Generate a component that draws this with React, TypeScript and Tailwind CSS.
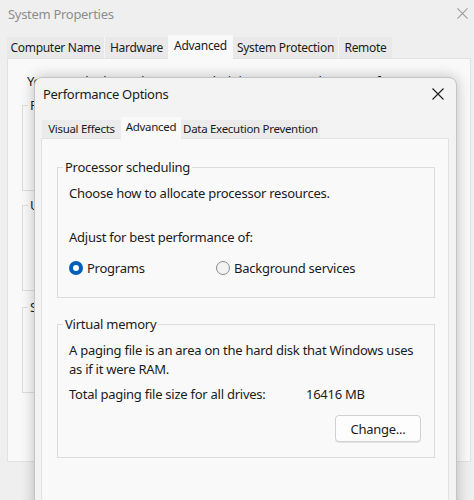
import React from "react";

function CloseIcon({ color, size }: { color: string; size: number }) {
  return (
    <svg width={size} height={size} viewBox="0 0 12 12" fill="none">
      <path d="M0.5 0.5L11.5 11.5M11.5 0.5L0.5 11.5" stroke={color} strokeWidth="1.1" />
    </svg>
  );
}

function Radio({ checked }: { checked: boolean }) {
  return checked ? (
    <svg width="14" height="14" viewBox="0 0 14 14">
      <circle cx="7" cy="7" r="7" fill="#005fb8" />
      <circle cx="7" cy="7" r="3" fill="#ffffff" />
    </svg>
  ) : (
    <svg width="14" height="14" viewBox="0 0 14 14">
      <circle cx="7" cy="7" r="6.5" fill="#f3f3f3" stroke="#8a8a8a" strokeWidth="1" />
    </svg>
  );
}

export default function App() {
  return (
    <div className="relative h-[500px] w-[474px] overflow-hidden whitespace-nowrap bg-[#efefef] font-['Noto_Sans','Open_Sans',sans-serif] text-[#1b1b1b]">
      {/* Background window: System Properties */}
      <div className="flex h-[27px] items-center justify-between pl-[8px] pr-[6px]">
        <span className="text-[13px] leading-[20px] tracking-[-0.3px] text-[#8e8e8e]">System Properties</span>
        <CloseIcon color="#9a9a9a" size={11} />
      </div>
      <div className="ml-[7px] mt-[8px] flex h-[23px] items-end text-[12px] leading-[16px] tracking-[-0.3px]">
        <div className="flex h-[21px] w-[98px] items-center justify-center border-r border-[#f6f6f6] bg-[#e9e9e9]">Computer Name</div>
        <div className="flex h-[21px] w-[63px] items-center justify-center bg-[#e9e9e9]">Hardware</div>
        <div className="relative z-10 mb-[-1px] flex h-[24px] w-[65px] items-center justify-center bg-[#f9f9f9] pb-[3px]">Advanced</div>
        <div className="flex h-[21px] w-[106px] items-center justify-center border-r border-[#f6f6f6] bg-[#e9e9e9]">System Protection</div>
        <div className="flex h-[21px] w-[53px] items-center justify-center bg-[#e9e9e9]">Remote</div>
      </div>
      <div className="ml-[7px] h-[404px] w-[464px] overflow-hidden border border-[#e2e2e2] bg-[#f9f9f9] text-[13px] tracking-[-0.25px]">
        <p className="ml-[19px] mt-[12px] w-[355px] overflow-hidden leading-[20px]">You must be logged on as an Administrator to make most of these changes.</p>
        <fieldset className="ml-[14px] mt-[4px] h-[96px] w-[432px] border border-[#dcdcdc]">
          <legend className="ml-[5px] px-[2px] leading-[20px]">Performance</legend>
        </fieldset>
        <fieldset className="ml-[14px] mt-[4px] h-[96px] w-[432px] border border-[#dcdcdc]">
          <legend className="ml-[5px] px-[2px] leading-[20px]">User Profiles</legend>
        </fieldset>
        <fieldset className="ml-[14px] mt-[6px] h-[96px] w-[432px] border border-[#dcdcdc]">
          <legend className="ml-[5px] px-[2px] leading-[20px]">Startup and Recovery</legend>
        </fieldset>
      </div>

      {/* Foreground dialog: Performance Options */}
      <div className="absolute left-[34px] top-[77px] h-[440px] w-[423px] rounded-t-[8px] border border-[#c4c4c4] bg-[#f3f3f3] shadow-[0_0_14px_rgba(0,0,0,0.24)]">
        <div className="flex h-[31px] items-center justify-between pl-[8px] pr-[12px]">
          <span className="text-[13px] leading-[20px] tracking-[-0.3px]">Performance Options</span>
          <CloseIcon color="#1b1b1b" size={12} />
        </div>
        <div className="ml-[7px] flex h-[29px] items-end text-[11.5px] leading-[16px] tracking-[-0.3px]">
          <div className="flex h-[18px] w-[79px] items-center justify-center bg-[#ebebeb]">Visual Effects</div>
          <div className="relative z-10 mb-[-1px] flex h-[22px] w-[60px] items-center justify-center bg-[#f9f9f9] pb-[3px]">Advanced</div>
          <div className="flex h-[18px] w-[139px] items-center justify-center bg-[#ebebeb]">Data Execution Prevention</div>
        </div>
        <div className="ml-[6px] h-[400px] w-[408px] border border-[#e2e2e2] bg-[#f9f9f9] text-[13px] leading-[20px] tracking-[-0.25px]">
          <fieldset className="ml-[15px] mt-[18px] w-[378px] border border-[#dcdcdc] pb-[19px] pl-[11px]">
            <legend className="ml-[-6px] px-[2px]">Processor scheduling</legend>
            <p className="mt-[6px]">Choose how to allocate processor resources.</p>
            <p className="mt-[24px]">Adjust for best performance of:</p>
            <div className="mt-[11px] flex h-[20px] items-center">
              <div className="flex w-[147px] items-center gap-[4px]">
                <Radio checked />
                <span>Programs</span>
              </div>
              <div className="flex items-center gap-[4px]">
                <Radio checked={false} />
                <span>Background services</span>
              </div>
            </div>
          </fieldset>
          <fieldset className="ml-[15px] mt-[16px] w-[378px] border border-[#dcdcdc] pb-[15px] pl-[11px] pr-[13px]">
            <legend className="ml-[-6px] px-[2px]">Virtual memory</legend>
            <p className="mt-[7px] leading-[19px]">
              A paging file is an area on the hard disk that Windows uses
              <br />
              as if it were RAM.
            </p>
            <div className="mt-[6px] flex leading-[19px]">
              <span className="w-[237px]">Total paging file size for all drives:</span>
              <span>16416 MB</span>
            </div>
            <div className="mt-[11px] flex justify-end">
              <button className="h-[27px] w-[86px] rounded-[4px] border border-[#d0d0d0] bg-[#fdfdfd] text-[13px] leading-[20px] tracking-[-0.25px] text-[#1b1b1b] shadow-[0_1px_0_rgba(0,0,0,0.08)]">
                Change...
              </button>
            </div>
          </fieldset>
        </div>
      </div>
    </div>
  );
}
